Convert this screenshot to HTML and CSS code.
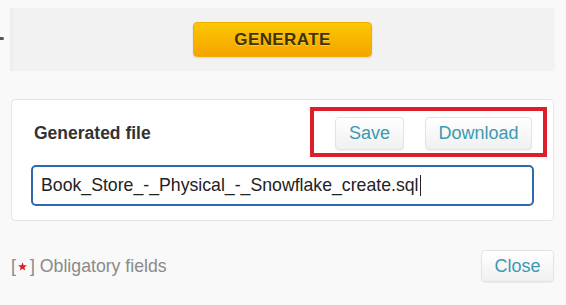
FILE: index.html
```html
<!DOCTYPE html>
<html lang="en">
<head>
<meta charset="utf-8">
<title>Generate</title>
<link rel="stylesheet" href="styles.css">
</head>
<body>
<div class="top-row">
  <span class="edge-mark"></span>
  <div class="generate-panel">
    <button class="btn-generate" type="button">GENERATE</button>
  </div>
</div>

<section class="card">
  <div class="card-head">
    <h2 class="card-title">Generated file</h2>
    <div class="actions">
      <button class="btn btn-save" type="button">Save</button>
      <button class="btn btn-download" type="button">Download</button>
      <span class="highlight"></span>
    </div>
  </div>
  <div class="file-field"><span class="file-name">Book_Store_-_Physical_-_Snowflake_create.sql</span><span class="caret"></span></div>
</section>

<footer class="footer">
  <p class="legend"><span class="bracket">[</span><svg class="star" viewBox="0 0 10 10" width="9" height="9"><polygon points="5,0.3 6.3,3.6 9.8,3.7 7.1,6 8.1,9.5 5,7.5 1.9,9.5 2.9,6 0.2,3.7 3.7,3.6" fill="#d81e2a"/></svg><span class="bracket">]</span><span class="legend-text">Obligatory fields</span></p>
  <button class="btn btn-close" type="button">Close</button>
</footer>
</body>
</html>
```

FILE: styles.css
```css
* { box-sizing: border-box; }

html, body {
  margin: 0;
  padding: 0;
  background: #f9f9f9;
  font-family: "Liberation Sans", Arial, sans-serif;
  color: #333;
}

body {
  width: 566px;
  height: 305px;
  overflow: hidden;
}

.top-row {
  display: flex;
  align-items: center;
  padding-top: 8px;
}

.edge-mark {
  width: 4px;
  height: 3px;
  margin-right: 6px;
  background: #555;
  border-radius: 0 2px 2px 0;
  margin-top: -2px;
}

.generate-panel {
  width: 545px;
  height: 63px;
  background: #f2f2f2;
  border-left: 3px solid #eeeeee;
  display: flex;
  align-items: center;
  justify-content: center;
  padding-right: 3px;
}

.btn-generate {
  width: 179px;
  height: 35px;
  border: 1px solid #f2ad00;
  border-radius: 4px;
  background: linear-gradient(#fcc700, #f4a400);
  box-shadow: 0 1px 2px rgba(0, 0, 0, 0.12);
  font-family: "Liberation Sans", Arial, sans-serif;
  font-weight: bold;
  font-size: 17px;
  letter-spacing: 0.4px;
  color: #3f3300;
  text-shadow: 0 1px 0 rgba(255, 230, 120, 0.5);
  padding: 0;
  cursor: pointer;
}

.card {
  margin: 28px 12px 0 11px;
  background: #fff;
  border: 1px solid #e6e6e6;
  border-radius: 4px;
  padding: 17px 19px 14px 19px;
}

.card-head {
  display: flex;
  align-items: center;
  justify-content: space-between;
}

.card-title {
  margin: 0 0 0 3px;
  font-size: 17.5px;
  font-weight: bold;
  color: #333;
}

.actions {
  position: relative;
  display: flex;
  gap: 21px;
  margin-right: 2px;
}

.btn {
  height: 33px;
  padding: 0;
  border: 1px solid #e3e3e3;
  border-radius: 4px;
  background: linear-gradient(#ffffff, #f0f0f0);
  box-shadow: 0 1px 1px rgba(0, 0, 0, 0.06);
  font-family: "Liberation Sans", Arial, sans-serif;
  font-size: 18px;
  color: #3b9ab2;
  cursor: pointer;
}

.btn-save { width: 69px; }
.btn-download { width: 107px; }

.highlight {
  position: absolute;
  top: -10px;
  left: -25px;
  right: -15px;
  bottom: -7px;
  border: 4px solid #dd1f2b;
  pointer-events: none;
}

.file-field {
  margin-top: 15px;
  height: 41px;
  border: 2px solid #2e69ae;
  border-radius: 5px;
  padding: 0 8px;
  display: flex;
  align-items: center;
  font-size: 17.7px;
  color: #222;
  background: #fff;
}

.caret {
  display: inline-block;
  width: 1px;
  height: 21px;
  background: #222;
  margin-left: 1px;
}

.footer {
  margin: 29px 12px 0 11px;
  display: flex;
  align-items: center;
  justify-content: space-between;
}

.legend {
  margin: 0;
  font-size: 17.7px;
  color: #8a8a8a;
  display: flex;
  align-items: center;
}

.bracket {
  color: #8a8a8a;
}

.star {
  margin: 0 3px 0 2px;
}

.legend-text {
  margin-left: 5px;
}

.btn-close {
  width: 73px;
  height: 32px;
}
```
